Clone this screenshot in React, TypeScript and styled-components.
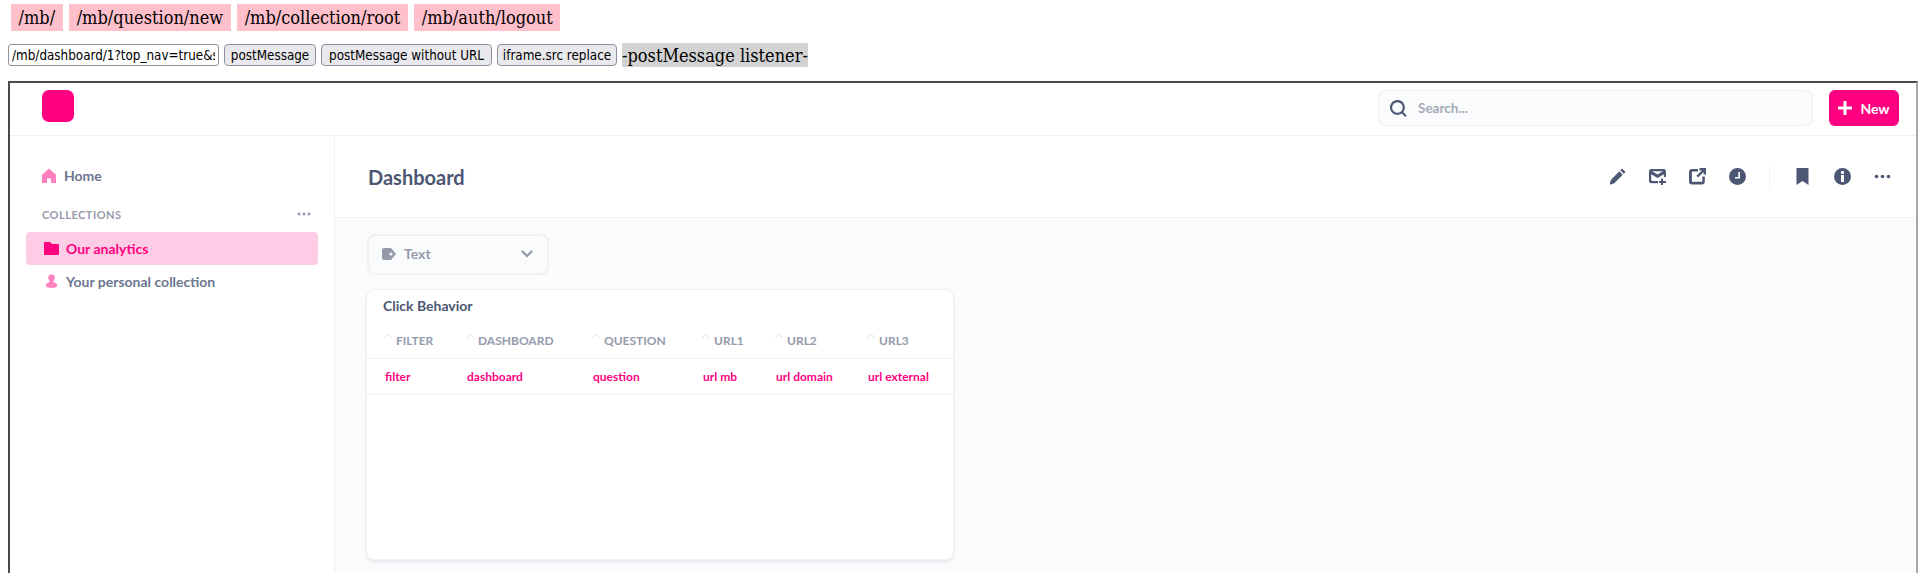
import React from 'react'
import styled, { createGlobalStyle } from 'styled-components'

const GlobalStyle = createGlobalStyle`
	html, body {
		margin: 0;
		height: 573px;
		overflow: hidden;
		background: #fff;
		font-family: "DejaVu Serif", serif;
	}
`

const pink = '#ff0080'
const slate = '#4c5773'
const navText = '#6c7690'
const muted = '#949aab'
const line = '#f0f0f3'

const LinkRow = styled.div`
	display: flex;
	gap: 6.5px;
	padding: 4px 0 0 11px;
	height: 26px;
`

const PageLink = styled.a`
	display: flex;
	align-items: center;
	padding: 0 7.5px;
	height: 27px;
	background: pink;
	color: #000;
	font-size: 18px;
	font-stretch: condensed;
`

const ToolRow = styled.div`
	display: flex;
	align-items: center;
	gap: 5px;
	margin: 13px 0 0 8px;
	height: 24px;
`

const UrlInput = styled.input`
	box-sizing: border-box;
	width: 211px;
	height: 22px;
	padding: 1px 3px;
	border: 1px solid #8f8f9d;
	border-radius: 3px;
	font-family: "DejaVu Sans", sans-serif;
	font-stretch: condensed;
	font-size: 13.33px;
	color: #000;
`

const ToolButton = styled.button<{ $width: number }>`
	box-sizing: border-box;
	width: ${(p) => p.$width}px;
	height: 22px;
	padding: 0;
	border: 1px solid #8f8f9d;
	border-radius: 4px;
	background: #e9e9ed;
	font-family: "DejaVu Sans", sans-serif;
	font-stretch: condensed;
	font-size: 13.33px;
	color: #000;
`

const Listener = styled.span`
	display: flex;
	align-items: center;
	height: 24px;
	background: #d3d3d3;
	font-size: 18px;
	font-stretch: condensed;
`

const Frame = styled.div`
	box-sizing: border-box;
	margin: 14px 0 0 8px;
	width: 1910px;
	height: 520px;
	border: 2px solid;
	border-color: #4a4a4a #a9a9a9 #a9a9a9 #4a4a4a;
	display: flex;
	flex-direction: column;
	overflow: hidden;
	font-family: Lato, sans-serif;
	color: ${slate};
`

const NavBar = styled.header`
	flex: none;
	box-sizing: border-box;
	height: 53px;
	padding: 7px 17px 0 32px;
	display: flex;
	align-items: flex-start;
	border-bottom: 1px solid ${line};
`

const Logo = styled.div`
	width: 32px;
	height: 32px;
	border-radius: 7px;
	background: ${pink};
`

const SearchBox = styled.div`
	box-sizing: border-box;
	margin-left: auto;
	width: 435px;
	height: 36px;
	padding: 0 11px;
	display: flex;
	align-items: center;
	gap: 11px;
	background: #f9fbfc;
	border: 1px solid ${line};
	border-radius: 6px;
	font-size: 13.5px;
	font-weight: 700;
	color: #a5aab8;
`

const NewButton = styled.button`
	box-sizing: border-box;
	margin-left: 16px;
	width: 70px;
	height: 36px;
	padding: 0;
	display: flex;
	align-items: center;
	justify-content: center;
	gap: 8px;
	border: 0;
	border-radius: 6px;
	background: ${pink};
	color: #fff;
	font-family: Lato, sans-serif;
	font-size: 14px;
	font-weight: 700;
`

const Body = styled.div`
	flex: 1;
	display: flex;
	min-height: 0;
`

const Sidebar = styled.nav`
	flex: none;
	box-sizing: border-box;
	width: 325px;
	padding: 28px 16px 0 16px;
	border-right: 1px solid ${line};
`

const NavRow = styled.div<{ $active?: boolean }>`
	display: flex;
	align-items: center;
	box-sizing: border-box;
	height: 33px;
	padding-left: 18px;
	gap: 7px;
	border-radius: 4px;
	font-size: 14px;
	font-weight: 700;
	background: ${(p) => (p.$active ? '#ffcce6' : 'transparent')};
	color: ${(p) => (p.$active ? pink : navText)};
`

const HomeRow = styled(NavRow)`
	height: 22px;
	padding-left: 16px;
	gap: 8px;
`

const SectionHead = styled.div`
	display: flex;
	align-items: center;
	justify-content: space-between;
	height: 20px;
	margin: 18px 7px 8px 16px;
	font-size: 11px;
	font-weight: 700;
	letter-spacing: 0.5px;
	color: ${muted};
`

const Main = styled.main`
	flex: 1;
	min-width: 0;
	background: #f9fbfc;
`

const DashHeader = styled.div`
	box-sizing: border-box;
	height: 82px;
	padding: 0 25px 0 33px;
	display: flex;
	align-items: center;
	justify-content: space-between;
	background: #fff;
	border-bottom: 1px solid ${line};
`

const DashTitle = styled.h1`
	margin: 0;
	font-size: 20px;
	font-weight: 700;
`

const IconBar = styled.div`
	display: flex;
	align-items: center;
	gap: 23px;
`

const BarDivider = styled.span`
	width: 1px;
	height: 20px;
	margin: 0 1px 0 0;
	background: ${line};
`

const DashContent = styled.div`
	padding: 16px 0 0 31px;
`

const ParamSelect = styled.div`
	box-sizing: border-box;
	width: 182px;
	height: 41px;
	margin-left: 1px;
	padding: 0 14px 2px 13px;
	display: flex;
	align-items: center;
	gap: 8px;
	border: 2px solid ${line};
	border-radius: 8px;
	font-size: 14px;
	font-weight: 700;
	color: ${muted};
`

const ChevronSlot = styled.span`
	margin-left: auto;
`

const Card = styled.section`
	box-sizing: border-box;
	width: 588px;
	height: 271px;
	margin-top: 14px;
	background: #fff;
	border: 1px solid ${line};
	border-radius: 8px;
	box-shadow: 0 2px 3px rgba(76, 87, 115, 0.1);
`

const CardTitle = styled.div`
	height: 32px;
	padding: 7px 0 0 16px;
	box-sizing: border-box;
	font-size: 14px;
	font-weight: 700;
`

const Grid = styled.div`
	display: grid;
	grid-template-columns: 82px 126px 110px 73px 92px 1fr;
	align-items: center;
	border-bottom: 1px solid ${line};
`

const HeadRow = styled(Grid)`
	height: 36px;
`

const DataRow = styled(Grid)`
	height: 35px;
`

const HeadCell = styled.div`
	display: flex;
	align-items: flex-start;
	gap: 4px;
	padding-left: 17px;
	font-size: 12px;
	line-height: 15px;
	font-weight: 700;
	color: ${muted};
	white-space: nowrap;
`

const DataCell = styled.div`
	padding-left: 18px;
	font-size: 12px;
	font-weight: 700;
	color: ${pink};
	white-space: nowrap;
`

const Icon = styled.svg<{ $color?: string }>`
	flex: none;
	display: block;
	fill: ${(p) => p.$color ?? slate};
`

const columns: [string, string][] = [
	['FILTER', 'filter'],
	['DASHBOARD', 'dashboard'],
	['QUESTION', 'question'],
	['URL1', 'url mb'],
	['URL2', 'url domain'],
	['URL3', 'url external'],
]

const CaretUp = () => (
	<svg width="8" height="5" viewBox="0 0 8 5" fill="none" stroke="#dcdfe5" strokeWidth="1">
		<path d="M.5 4.500L4 1l3.500 3.500" />
	</svg>
)

export default function App() {
	return (
		<>
			<GlobalStyle />
			<LinkRow>
				<PageLink>/mb/</PageLink>
				<PageLink>/mb/question/new</PageLink>
				<PageLink>/mb/collection/root</PageLink>
				<PageLink>/mb/auth/logout</PageLink>
			</LinkRow>
			<ToolRow>
				<UrlInput readOnly value="/mb/dashboard/1?top_nav=true&side_nav=true" />
				<ToolButton $width={92}>postMessage</ToolButton>
				<ToolButton $width={171}>postMessage without URL</ToolButton>
				<ToolButton $width={120}>iframe.src replace</ToolButton>
				<Listener>-postMessage listener-</Listener>
			</ToolRow>
			<Frame>
				<NavBar>
					<Logo />
					<SearchBox>
						<Icon width="17" height="17" viewBox="0 0 16 16">
							<path d="M7 0a7 7 0 0 1 5.500 11.300l3.200 3.200-1.400 1.400-3.200-3.200A7 7 0 1 1 7 0zm0 2a5 5 0 1 0 0 10A5 5 0 0 0 7 2z" />
						</Icon>
						Search...
					</SearchBox>
					<NewButton>
						<Icon $color="#fff" width="14" height="14" viewBox="0 0 14 14">
							<path d="M5.500 0h3v5.500H14v3H8.500V14h-3V8.500H0v-3h5.500z" />
						</Icon>
						New
					</NewButton>
				</NavBar>
				<Body>
					<Sidebar>
						<HomeRow>
							<Icon $color="#ff80bf" width="14" height="15" viewBox="0 0 14 15">
								<path d="M7 .5l7 6.300V15H9v-4.500H5V15H0V6.800z" />
							</Icon>
							Home
						</HomeRow>
						<SectionHead>
							COLLECTIONS
							<Icon $color={muted} width="14" height="4" viewBox="0 0 14 4">
								<circle cx="2" cy="2" r="1.500" />
								<circle cx="7" cy="2" r="1.500" />
								<circle cx="12" cy="2" r="1.500" />
							</Icon>
						</SectionHead>
						<NavRow $active>
							<Icon $color={pink} width="15" height="13" viewBox="0 0 15 13">
								<path d="M1 0h5l2 2h6a1 1 0 0 1 1 1v9a1 1 0 0 1-1 1H1a1 1 0 0 1-1-1V1a1 1 0 0 1 1-1z" />
							</Icon>
							Our analytics
						</NavRow>
						<NavRow>
							<Icon $color="#ff80bf" width="15" height="15" viewBox="-1 0 17 16">
								<path d="M7.500 0a3.600 3.600 0 0 1 3.600 3.800c0 1.600-.8 3-1.600 3.800 0 .7.3 1.200 1 1.500 2 .7 3.500 1.400 3.500 3.600 0 1.300-2.500 2.300-6.500 2.300S1 14 1 12.700c0-2.200 1.500-2.900 3.500-3.600.7-.3 1-.8 1-1.500-.8-.8-1.600-2.200-1.600-3.800A3.600 3.600 0 0 1 7.500 0z" />
							</Icon>
							Your personal collection
						</NavRow>
					</Sidebar>
					<Main>
						<DashHeader>
							<DashTitle>Dashboard</DashTitle>
							<IconBar>
								<Icon width="17" height="17" viewBox="0 0 17 17">
									<path d="M13 .5l3.500 3.500-1.700 1.700-3.500-3.500zM10.300 3.200l3.500 3.500-8.300 8.300C5 15.500 2 16.700 1 16.300c-.4-1 .8-4 1.300-4.800z" />
								</Icon>
								<Icon width="17" height="17" viewBox="0 0 17 17">
									<path fillRule="evenodd" d="M2.500 1h12A2.500 2.500 0 0 1 17 3.500V9h-2.200V6.200L8.500 10 2.200 6.200V12a1 1 0 0 0 1 1H9v2.200H2.500A2.500 2.500 0 0 1 0 12.700V3.500A2.500 2.500 0 0 1 2.500 1zm.700 2.200l5.300 3.300 5.300-3.300zM12 10.500h2V13h3v2h-3v2h-2v-2H10v-2h2z" />
								</Icon>
								<Icon width="17" height="17" viewBox="0 0 17 17">
									<path d="M3 1h6v2.400H3.200a.3.3 0 0 0-.3.3v9.800a.3.3 0 0 0 .3.300H13a.3.3 0 0 0 .3-.3V8.500h2.500V13.500a3 3 0 0 1-3 3H3a3 3 0 0 1-3-3v-9.500a3 3 0 0 1 3-3zM10.500 0H17v6.500h-2.400V4l-5.500 5.500-1.700-1.700L12.900 2.400h-2.400z" />
								</Icon>
								<Icon width="17" height="17" viewBox="0 0 17 17">
									<path fillRule="evenodd" d="M8.500 0a8.500 8.500 0 1 1 0 17 8.500 8.500 0 0 1 0-17zM9.300 4H11v6.500H6V9h3.300z" />
								</Icon>
								<BarDivider />
								<Icon width="17" height="17" viewBox="0 0 17 17">
									<path d="M2.500 0h12v17l-6-4-6 4z" />
								</Icon>
								<Icon width="17" height="17" viewBox="0 0 17 17">
									<path fillRule="evenodd" d="M8.500 0a8.500 8.500 0 1 1 0 17 8.500 8.500 0 0 1 0-17zM7 7v7h3V7zM8.500 2.800a1.700 1.700 0 1 0 0 3.400 1.700 1.700 0 0 0 0-3.400z" />
								</Icon>
								<Icon width="17" height="17" viewBox="0 0 17 17">
									<circle cx="2.500" cy="8.500" r="1.800" />
									<circle cx="8.500" cy="8.500" r="1.800" />
									<circle cx="14.500" cy="8.500" r="1.800" />
								</Icon>
							</IconBar>
						</DashHeader>
						<DashContent>
							<ParamSelect>
								<Icon $color={muted} width="14" height="12" viewBox="0 0 14 12">
									<path fillRule="evenodd" d="M2 0h7l5 6-5 6H2a2 2 0 0 1-2-2V2a2 2 0 0 1 2-2zm7 4.500a1.500 1.500 0 1 0 0 3 1.500 1.500 0 0 0 0-3z" />
								</Icon>
								Text
								<ChevronSlot>
									<Icon $color={muted} width="12" height="8" viewBox="0 0 13 9">
										<path d="M1.500 0l5 5 5-5L13 2 6.500 8.500 0 2z" />
									</Icon>
								</ChevronSlot>
							</ParamSelect>
							<Card>
								<CardTitle>Click Behavior</CardTitle>
								<HeadRow>
									{columns.map(([head]) => (
										<HeadCell key={head}><CaretUp />{head}</HeadCell>
									))}
								</HeadRow>
								<DataRow>
									{columns.map(([head, value]) => (
										<DataCell key={head}>{value}</DataCell>
									))}
								</DataRow>
							</Card>
						</DashContent>
					</Main>
				</Body>
			</Frame>
		</>
	)
}
